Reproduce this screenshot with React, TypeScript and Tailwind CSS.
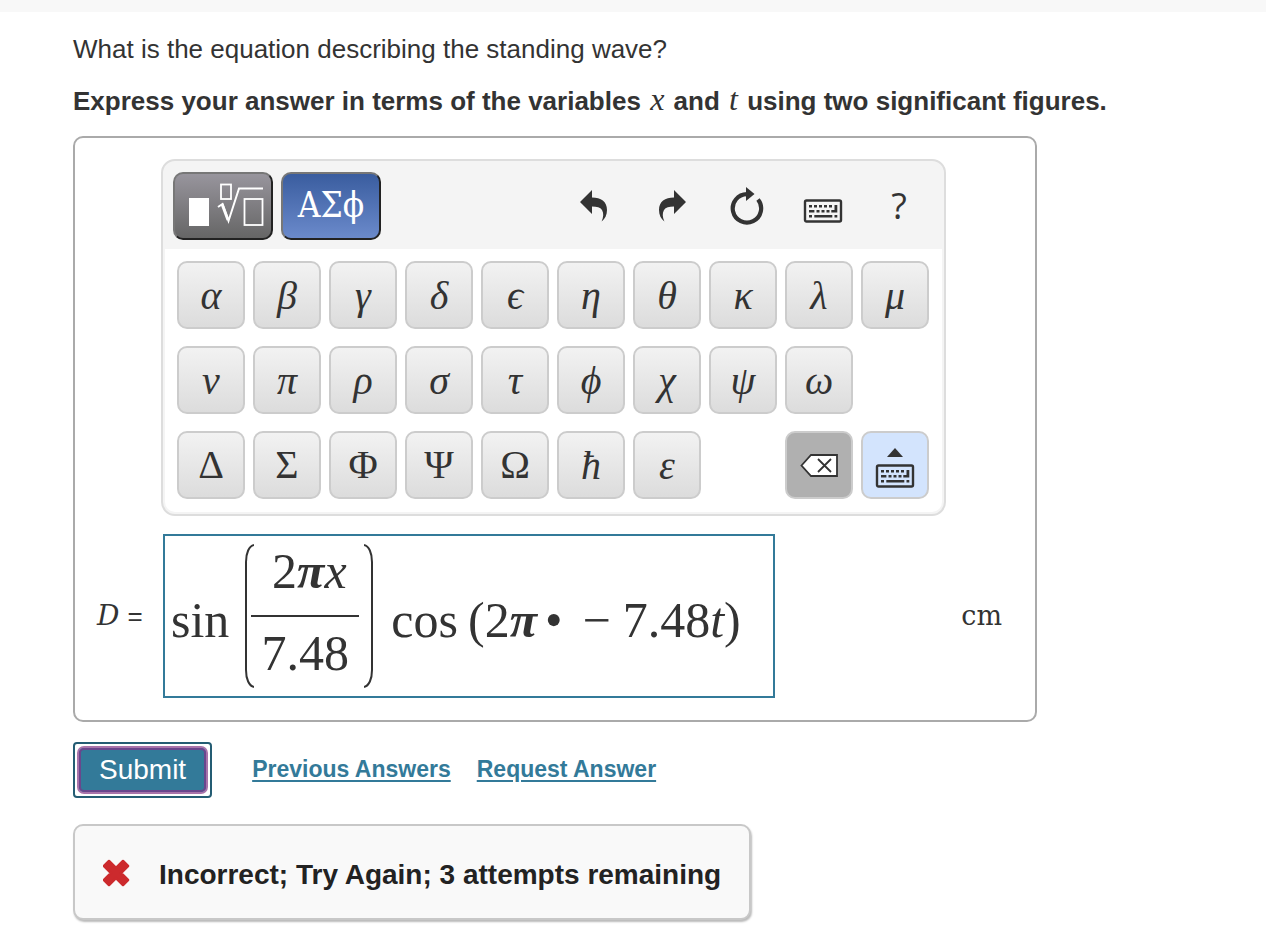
import type { ReactNode } from "react";

type Key = { char: string; name: string; upright?: boolean };

const keyRows: Key[][] = [
  [
    { char: "α", name: "alpha" },
    { char: "β", name: "beta" },
    { char: "γ", name: "gamma" },
    { char: "δ", name: "delta" },
    { char: "ϵ", name: "epsilon" },
    { char: "η", name: "eta" },
    { char: "θ", name: "theta" },
    { char: "κ", name: "kappa" },
    { char: "λ", name: "lambda" },
    { char: "μ", name: "mu" },
  ],
  [
    { char: "ν", name: "nu" },
    { char: "π", name: "pi" },
    { char: "ρ", name: "rho" },
    { char: "σ", name: "sigma" },
    { char: "τ", name: "tau" },
    { char: "ϕ", name: "phi" },
    { char: "χ", name: "chi" },
    { char: "ψ", name: "psi" },
    { char: "ω", name: "omega" },
  ],
  [
    { char: "Δ", name: "Delta", upright: true },
    { char: "Σ", name: "Sigma", upright: true },
    { char: "Φ", name: "Phi", upright: true },
    { char: "Ψ", name: "Psi", upright: true },
    { char: "Ω", name: "Omega", upright: true },
    { char: "ħ", name: "h bar" },
    { char: "ε", name: "variant epsilon" },
  ],
];

function KeyboardIcon() {
  return (
    <svg width="40" height="24" viewBox="0 0 40 24" fill="#333">
      <rect x="2" y="1.5" width="36" height="21" rx="1.5" fill="none" stroke="#333" strokeWidth="2.4" />
      <path d="M6 6h3v2.4H6zM11 6h3v2.4h-3zM16 6h3v2.4h-3zM21 6h3v2.4h-3zM26 6h3v2.4h-3z" />
      <path d="M6 11h5.4v2.4H6zM13.5 11h3v2.4h-3zM18.5 11h3v2.4h-3zM23.5 11h3v2.4h-3z" />
      <path d="M31.5 6h2.8v7.4h-6V11h3.2z" />
      <path d="M6 16h3v2.6H6zM11.3 16h18v2.6h-18zM31.5 16h2.8v2.6h-2.8z" />
    </svg>
  );
}

function TemplatesIcon() {
  return (
    <svg width="76" height="46" viewBox="0 0 76 46" fill="none" stroke="#fff">
      <rect x="1" y="15" width="20" height="28" fill="#fff" stroke="none" />
      <rect x="33" y="1.5" width="10" height="14.5" strokeWidth="1.8" />
      <path d="M30 24l4.5-3 6 17L51 5.5h24" strokeWidth="2" />
      <path d="M34 21l6 16" strokeWidth="3" />
      <rect x="56.5" y="16" width="18" height="26" strokeWidth="1.8" />
    </svg>
  );
}

function UndoIcon({ flipped = false }: { flipped?: boolean }) {
  return (
    <svg
      width="30"
      height="32"
      viewBox="0 0 30 32"
      fill="#333"
      className={flipped ? "-scale-x-100" : undefined}
    >
      <path d="M0 12L12 0v7.6c9 0 15 4 15 12.4 0 5-2 9-5.400 11.5 2-4.500 2.200-8.500.4-11.5-1.700-2.600-5-3.500-10-3.500V24z" />
    </svg>
  );
}

function ResetIcon() {
  return (
    <svg width="34" height="38" viewBox="0 0 34 38" fill="none">
      <path d="M17 7.2A14.2 14.2 0 1 0 28 12.5" stroke="#333" strokeWidth="4.2" />
      <path d="M16 0l8.500 7L16 14z" fill="#333" />
    </svg>
  );
}

function BackspaceIcon() {
  return (
    <svg width="38" height="23" viewBox="0 0 38 23" stroke="#333">
      <path d="M1.500 11.500L11 1h26v21H11z" fill="#fff" strokeWidth="1.8" />
      <path d="M18 5l13 13M31 5L18 18" strokeWidth="1.8" />
    </svg>
  );
}

function Paren({ right = false }: { right?: boolean }) {
  return (
    <svg
      viewBox="0 0 9 144"
      fill="none"
      stroke="#333"
      strokeWidth="2"
      className={right ? "h-36 w-[9px] -scale-x-100" : "h-36 w-[9px]"}
    >
      <path d="M9 1C4 2 1 9 1 18v108c0 9 3 16 8 17" />
    </svg>
  );
}

function ToolButton({ label, children }: { label: string; children: ReactNode }) {
  return (
    <button type="button" aria-label={label} className="flex h-17 w-10 items-center justify-center">
      {children}
    </button>
  );
}

function SymbolKey({ char, name, upright }: Key) {
  return (
    <button
      type="button"
      aria-label={name}
      className={`flex size-17 items-center justify-center rounded-[10px] border-2 border-[#ccc] bg-linear-to-b from-[#f2f2f2] to-[#dcdcdc] font-['Liberation_Serif','DejaVu_Serif',serif] text-[40px] leading-none ${
        upright ? "" : "pt-0.5 italic"
      }`}
    >
      {char}
    </button>
  );
}

function SymbolPalette() {
  return (
    <div className="ml-[86px] w-fit overflow-hidden rounded-[14px] border-2 border-[#ddd] bg-[#f4f4f4]">
      <div className="flex items-center gap-2 px-2.5 pt-[11px] pb-[9px]">
        <button
          type="button"
          aria-label="Templates"
          className="flex h-17 w-25 items-center justify-end rounded-[10px] border-2 border-t-[#777] border-r-[#222] border-b-[#222] border-l-[#777] bg-linear-to-b from-[#98959d] to-[#666] pr-[7px]"
        >
          <TemplatesIcon />
        </button>
        <button
          type="button"
          className="flex h-17 w-25 items-center justify-center rounded-[10px] border-2 border-t-[#777] border-r-[#222] border-b-[#222] border-l-[#777] bg-linear-to-b from-[#3a5d9f] to-[#6b8acb] pb-0.5 font-['DejaVu_Serif_Condensed','DejaVu_Serif',serif] text-[35px] leading-none text-white"
        >
          ΑΣϕ
        </button>
        <div className="ml-auto flex gap-9 pr-[15px]">
          <ToolButton label="Undo">
            <UndoIcon />
          </ToolButton>
          <ToolButton label="Redo">
            <UndoIcon flipped />
          </ToolButton>
          <ToolButton label="Reset">
            <ResetIcon />
          </ToolButton>
          <ToolButton label="Keyboard shortcuts">
            <span className="pt-2.5">
              <KeyboardIcon />
            </span>
          </ToolButton>
          <ToolButton label="Help">
            <span className="font-['Open_Sans',sans-serif] text-[36px] leading-none">?</span>
          </ToolButton>
        </div>
      </div>
      <div className="mx-0.5 mb-0.5 flex flex-col gap-[17px] rounded-b-[10px] bg-white pt-3 pr-[13px] pb-[13px] pl-3">
        {keyRows.map((row, i) => (
          <div key={i} className="grid w-fit grid-cols-10 gap-2">
            {row.map((k) => (
              <SymbolKey key={k.name} {...k} />
            ))}
            {i === 2 && (
              <>
                <button
                  type="button"
                  aria-label="Backspace"
                  className="col-start-9 flex size-17 items-center justify-center rounded-[10px] border-2 border-[#ccc] bg-[#b0b0b0]"
                >
                  <BackspaceIcon />
                </button>
                <button
                  type="button"
                  aria-label="Toggle keyboard"
                  className="flex size-17 flex-col items-center justify-center gap-[7px] rounded-[10px] border-2 border-[#ccc] bg-[#d3e4fd] pt-1.5"
                >
                  <svg width="16" height="9" viewBox="0 0 16 9" fill="#333">
                    <path d="M8 0l8 9H0z" />
                  </svg>
                  <KeyboardIcon />
                </button>
              </>
            )}
          </div>
        ))}
      </div>
    </div>
  );
}

function Equation() {
  return (
    <div
      role="textbox"
      tabIndex={0}
      aria-labelledby="answer-label"
      className="flex w-[612px] items-center border-2 border-[#337a99] px-1.5 py-[7px] font-['Liberation_Serif',serif] text-[50px] leading-14"
    >
      <span className="pt-2">sin</span>
      <div className="ml-4 flex items-center">
        <Paren />
        <div className="mr-1 -ml-1 flex w-[110px] flex-col items-center pb-2">
          <span className="pl-2">
            2<i className="font-bold">π</i>
            <i>x</i>
          </span>
          <span className="mt-4 h-0.5 w-[108px] bg-[#333]" />
          <span className="pt-2">7.48</span>
        </div>
        <Paren right />
      </div>
      <div className="ml-[18px] flex pt-2">
        <span className="mr-2.5">cos</span>
        <span>
          (2<i className="font-bold">π</i>
        </span>
        <span className="mx-2">•</span>
        <span className="mx-3">−</span>
        <span>
          7.48<i>t</i>)
        </span>
      </div>
    </div>
  );
}

export default function App() {
  return (
    <div className="font-['Liberation_Sans',Arial,sans-serif] text-[#333]">
      <div className="h-3 bg-[#f8f8f8]" />
      <main className="px-[73px] pt-[21px] pb-3">
        <p className="text-[26px] leading-8">What is the equation describing the standing wave?</p>
        <p className="mt-[18px] text-[26px] leading-8 font-bold">
          Express your answer in terms of the variables{" "}
          <i className="mx-0.5 font-['Liberation_Serif',serif] text-[32px] leading-none font-normal">x</i> and{" "}
          <i className="mx-0.5 font-['Liberation_Serif',serif] text-[32px] leading-none font-normal">t</i> using
          two significant figures.
        </p>

        <section className="mt-[19px] max-w-[964px] rounded-[10px] border-2 border-[#aaa] pt-[21px] pb-[22px]">
          <SymbolPalette />
          <div className="mt-[18px] flex items-center pr-[33px]">
            <div id="answer-label" className="flex w-[88px] items-center gap-2 pl-[22px]">
              <i className="font-['DejaVu_Serif',serif] text-[28px] leading-10">D</i>
              <span className="text-[26px]">=</span>
            </div>
            <Equation />
            <span className="ml-auto font-['DejaVu_Serif',serif] text-[27px] leading-10">cm</span>
          </div>
        </section>

        <div className="mt-5 flex items-center">
          <button
            type="button"
            className="rounded-[4px] border-2 border-[#245c73] bg-white p-0.5 text-[28px] leading-10 text-white"
          >
            <span className="block rounded-[7px] border-2 border-[#a873ab] bg-[#337a99]">
              <span className="block rounded-[5px] border-2 border-[#69478d] px-[18px]">Submit</span>
            </span>
          </button>
          <div className="ml-10 flex gap-[26px] pb-0.5 text-[23px] font-bold text-[#337a99]">
            <a href="#previous" className="underline decoration-2 underline-offset-3">
              Previous Answers
            </a>
            <a href="#request" className="underline decoration-2 underline-offset-3">
              Request Answer
            </a>
          </div>
        </div>

        <div
          role="status"
          className="mt-[26px] flex w-fit items-center rounded-[10px] border-2 border-[#c8c8c8] bg-[#f9f9f9] px-7 pt-[31px] pb-[25px] shadow-[1px_2px_2px_#bbb]"
        >
          <svg width="28" height="28" viewBox="0 0 28 28" className="mb-1" stroke="#cc2a2d" fill="#cc2a2d">
            <path
              d="M6 2l7 7 7-7 5 5-7 7 7 7-5 5-7-7-7 7-5-5 7-7-7-7z"
              strokeWidth="2.5"
              strokeLinejoin="round"
            />
          </svg>
          <p className="ml-7 text-[28px] leading-9 font-bold text-[#222]">
            Incorrect; Try Again; 3 attempts remaining
          </p>
        </div>
      </main>
    </div>
  );
}
